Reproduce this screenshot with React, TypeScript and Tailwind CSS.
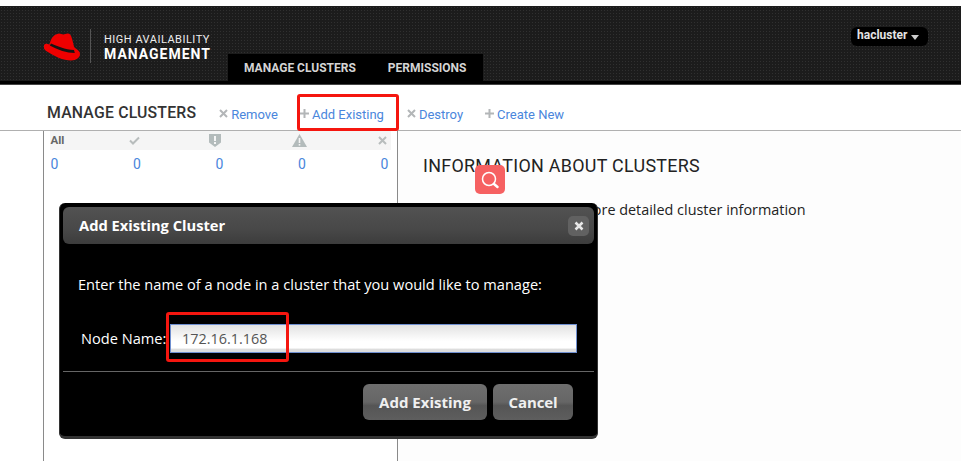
import React from "react";

const Hat = () => (
  <svg width="36" height="28" viewBox="0 0 36 28" className="shrink-0 mt-[2px]">
    <path d="M15 .5c1.500 0 3 1 4.500 1s2.500-1.200 4.500-1c2.500.2 3.500 3 4.500 7l1.500 6c.5 2 6 3.500 6 7.500 0 3.500-3.500 6.500-9 6.500-8 0-16-4-24-9-2-1.300-3.500-3-3.500-5 0-2 2-3 4-2.500l2 .5c1-3 2-10 9.500-11z" fill="#ee0000" />
    <path d="M7 10.500c6 2.500 14 6 23 6.500l.8 3c-8 0-17-3-25-7.500z" fill="#141414" />
  </svg>
);

const XIcon = () => (
  <svg width="9" height="9" viewBox="0 0 9 9"><path d="M1 1l7 7M8 1L1 8" stroke="#b3b6b8" strokeWidth="2" /></svg>
);
const PlusIcon = () => (
  <svg width="9" height="9" viewBox="0 0 9 9"><path d="M4.500 0v9M0 4.500h9" stroke="#b3b6b8" strokeWidth="2" /></svg>
);

const Action = ({ icon, label }: { icon: "x" | "plus"; label: string }) => (
  <div className="flex items-center gap-[3px] text-[13px] text-[#4a86dc]">
    <span className="-translate-y-px">{icon === "x" ? <XIcon /> : <PlusIcon />}</span>
    <span>{label}</span>
  </div>
);

const Check = () => (
  <svg width="11" height="9" viewBox="0 0 11 9"><path d="M1 4.500l3 3 6-6" stroke="#b8bdbd" strokeWidth="2" fill="none" /></svg>
);
const Shield = () => (
  <svg width="12" height="13" viewBox="0 0 12 13"><path d="M0 0h12v8.500L6 13 0 8.500z" fill="#b3bbbb" /><rect x="5" y="2" width="2" height="5" fill="#f5f5f5" /><rect x="5" y="8" width="2" height="2" fill="#f5f5f5" /></svg>
);
const Warn = () => (
  <svg width="15" height="13" viewBox="0 0 15 13"><path d="M7.500 0L15 13H0z" fill="#b3bbbb" /><rect x="6.700" y="4" width="1.600" height="5" fill="#f5f5f5" /><rect x="6.700" y="10" width="1.600" height="1.600" fill="#f5f5f5" /></svg>
);
const Cross = () => (
  <svg width="9" height="9" viewBox="0 0 9 9"><path d="M1 1l7 7M8 1L1 8" stroke="#b8bdbd" strokeWidth="2" /></svg>
);

const heads = [
  <span className="text-[11.500px] font-bold text-[#666] translate-x-[2px]">All</span>,
  <span className="-translate-x-[3px] flex"><Check /></span>,
  <span className="-translate-x-[4px] flex"><Shield /></span>,
  <span className="-translate-x-[1px] flex"><Warn /></span>,
  <span className="flex"><Cross /></span>,
];

export default function App() {
  return (
    <div className="relative w-[961px] h-[461px] overflow-hidden bg-white font-['Roboto','Liberation_Sans',sans-serif]">
      <div className="h-[6px] bg-white" />
      <header className="relative h-[79px] bg-[#1c1c1c] bg-[radial-gradient(#303030_1px,transparent_1px)] bg-[length:3px_3px] border-b-[1px] border-[#444]">
        <div className="absolute inset-x-0 bottom-0 h-[3px] bg-black" />
        <div className="relative flex h-full items-end pl-[44px]">
          <div className="self-start flex items-center mt-[23px]">
            <Hat />
            <div className="ml-[10px] w-px h-[34px] bg-[#555]" />
            <div className="ml-[13px] w-[124px] pt-[3px] text-white leading-none">
              <div className="text-[11px] tracking-[0.5px] text-[#eee]">HIGH AVAILABILITY</div>
              <div className="text-[14px] font-bold tracking-[1px] mt-[2px]">MANAGEMENT</div>
            </div>
          </div>
          <nav className="h-[30px] pb-[2px] bg-black flex items-center pl-[16px] w-[255px] gap-[32px] text-[12px] font-bold text-[#d4d4d4]">
            <span>MANAGE CLUSTERS</span>
            <span>PERMISSIONS</span>
          </nav>
          <div className="absolute right-[33px] top-[21px] h-[19px] w-[77px] bg-black rounded-[6px] flex items-start pl-[6px] gap-[4px] text-[12px] font-bold text-[#e4e4e4] leading-[17px]">
            <span>hacluster</span>
            <span className="mt-[8px] w-0 h-0 border-x-[4.500px] border-x-transparent border-t-[5px] border-t-[#ccc]" />
          </div>
        </div>
      </header>

      <div className="h-[45px] flex items-center pl-[47px] pt-[11px]">
        <h1 className="text-[15.800px] font-medium text-[#333] tracking-[0.2px]">MANAGE CLUSTERS</h1>
        <div className="ml-[23px] flex items-center mt-[3px]">
          <Action icon="x" label="Remove" />
          <div className="ml-[22px]"><Action icon="plus" label="Add Existing" /></div>
          <div className="ml-[23px]"><Action icon="x" label="Destroy" /></div>
          <div className="ml-[22px]"><Action icon="plus" label="Create New" /></div>
        </div>
      </div>

      <main className="flex h-[331px] border-t border-[#b0b0b0]">
        <section className="ml-[43px] w-[355px] border-x border-[#8a8a8a] bg-white">
          <div className="mx-[6px] h-[19px] bg-[#f5f5f5] flex justify-between items-center pr-[3px]">
            {heads.map((h, i) => (
              <div key={i} className="w-[11px] flex justify-center">{h}</div>
            ))}
          </div>
          <div className="ml-[5px] mr-[7px] mt-[4px] flex justify-between text-[14px] text-[#4a86dc] leading-5">
            {heads.map((_, i) => (
              <div key={i} className="w-[11px] flex justify-center">0</div>
            ))}
          </div>
        </section>
        <section className="flex-1 bg-[#fdfdfd] pl-[25px] pt-[24px] text-[#222]">
          <h2 className="text-[17.900px] font-normal tracking-[0.3px] leading-[22px]">INFORMATION ABOUT CLUSTERS</h2>
          <p className="mt-[23px] text-[14.400px] font-['Open_Sans','Noto_Sans',sans-serif] leading-5 pl-[1px]">Select a cluster to view more detailed cluster information</p>
        </section>
      </main>

      <div className="absolute left-[475px] top-[165px] w-[30px] h-[29px] rounded-[5px] bg-[#f66162] flex items-center justify-center">
        <svg width="22" height="22" viewBox="0 0 22 22" fill="none" stroke="white" strokeWidth="1.500">
          <circle cx="10" cy="10" r="6.500" />
          <path d="M15 15l3.500 3" strokeWidth="2.500" strokeLinecap="round" />
        </svg>
      </div>

      <div role="dialog" className="absolute left-[59px] top-[203px] w-[539px] h-[236px] rounded-[6px] bg-black border-b-[3px] border-x-[1px] border-[#333] font-['Open_Sans','Noto_Sans',sans-serif] text-white">
        <div className="mx-[3px] mt-[4px] h-[37px] rounded-[6px] bg-[linear-gradient(#525252,#484848_60%,#3c3c3c)] flex items-center justify-between pl-[16px] pr-[5px]">
          <span className="text-[14.700px] font-bold">Add Existing Cluster</span>
          <span className="w-[21px] h-[20px] rounded-[5px] bg-[#616161] flex items-center justify-center">
            <svg width="10" height="10" viewBox="0 0 10 10"><path d="M1.500 1.500l7 7M8.500 1.500l-7 7" stroke="#e8e8e8" strokeWidth="2.500" /></svg>
          </span>
        </div>
        <p className="ml-[18px] mt-[30px] text-[14.600px] leading-5 whitespace-nowrap">Enter the name of a node in a cluster that you would like to manage:</p>
        <div className="ml-[21px] mt-[30px] flex items-center">
          <label className="w-[86px] text-[14.600px] whitespace-nowrap">Node Name:</label>
          <input
            readOnly
            value="172.16.1.168"
            className="ml-[3px] w-[407px] h-[29px] border border-[#6f8fd0] bg-[linear-gradient(#e2e2e2,#ffffff_60%,#ffffff_85%,#dddddd_90%)] pl-[11px] text-[14.400px] text-[#555] outline-none"
          />
        </div>
        <div className="mt-[18px] mx-[3px] h-px bg-[#666]" />
        <div className="mt-[12px] flex justify-end gap-[6px] pr-[24px]">
          <button className="w-[124px] h-[36px] rounded-[6px] bg-[linear-gradient(#6e6e6e,#666666_50%,#555555_60%,#5e5e5e)] text-[15px] font-bold text-[#f0f0f0]">Add Existing</button>
          <button className="w-[80px] h-[36px] rounded-[6px] bg-[linear-gradient(#6e6e6e,#666666_50%,#555555_60%,#5e5e5e)] text-[15px] tracking-[-0.1px] font-bold text-[#f0f0f0]">Cancel</button>
        </div>
      </div>

      <div className="absolute left-[297px] top-[94px] w-[102px] h-[37px] border-[3px] border-[#f5160f] rounded-[3px]" />
      <div className="absolute left-[166px] top-[312px] w-[123px] h-[50px] border-[3px] border-[#f5160f] rounded-[3px]" />
    </div>
  );
}
